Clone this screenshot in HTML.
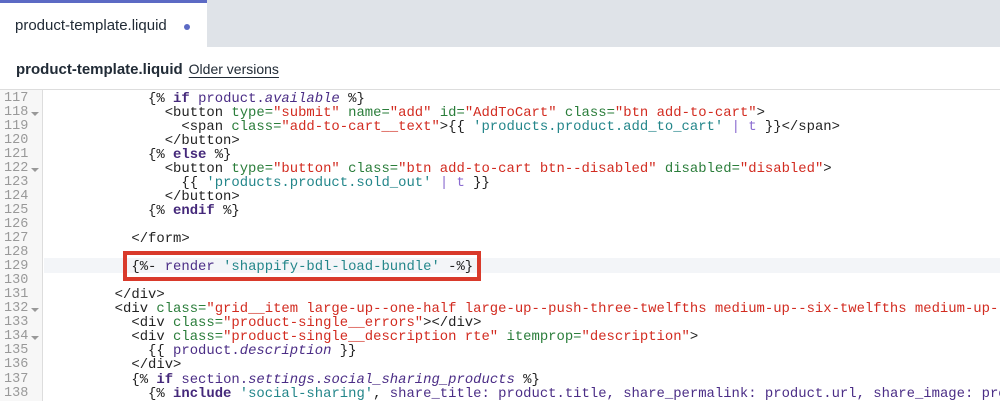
<!DOCTYPE html>
<html><head><meta charset="utf-8"><style>
*{margin:0;padding:0;box-sizing:border-box}
body{width:1000px;height:400px;overflow:hidden;background:#fff;font-family:"Liberation Sans",sans-serif;position:relative}
.tabs{position:absolute;left:0;top:0;width:1000px;height:47px;background:#dfe3e8}
.tab{position:absolute;left:0;top:0;width:207px;height:47px;background:#fff;border-top:3px solid #5c6ac4}
.tab span{position:absolute;left:15px;top:14px;font-size:15px;color:#212b36}
.dot{position:absolute;left:184px;top:21px;width:6px;height:6px;border-radius:50%;background:#5c6ac4}
.hdr{position:absolute;left:16px;top:61px;font-size:15px;color:#212b36}
.hdr b{font-weight:bold}
.hdr u{margin-left:6px;font-size:14px;text-decoration:underline;text-underline-offset:3px}
.ed{position:absolute;left:0;top:89px;width:1000px;height:311px;border-top:1px solid #ddd}
.gut{position:absolute;left:0;top:0;width:43px;height:311px;background:#f7f7f7;border-right:1px solid #ddd}
.ln{position:absolute;left:4px;font-family:"Liberation Mono",monospace;font-size:13.5px;color:#999;height:14px;line-height:14px}
.ar{position:absolute;left:31px;width:0;height:0;border-left:4px solid transparent;border-right:4px solid transparent;border-top:4px solid #999}
.cl{position:absolute;left:48px;white-space:pre;font-family:"Liberation Mono",monospace;font-size:13.9px;height:14px;line-height:14px;color:#222}
.hl{position:absolute;left:44px;top:168px;width:956px;height:15px;background:#f3f5f8}
.box{position:absolute;left:123px;top:251px;width:358px;height:30px;border:4px solid #d93a2b}
.k{color:#44287a;font-weight:bold}.v{color:#4b2d86}.i{font-style:italic}.s{color:#d22b20}.a{color:#2a7d3a}.q{color:#23868a}.p{color:#8a6bd0}
</style></head><body>
<div class="tabs"><div class="tab"><span>product-template.liquid</span><div class="dot"></div></div></div>
<div class="hdr"><b>product-template.liquid</b><u>Older versions</u></div>
<div class="ed">
<div class="gut"></div>
<div class="hl"></div>
</div>
<div class="box"></div>
<div id="c"></div>
<script>
var L=[
[117,12,'<span>{% </span><span class="k">if</span> <span class="v">product.<span class="i">available</span></span> %}',0],
[118,14,'&lt;button <span class="a">type=</span><span class="s">"submit"</span> <span class="a">name=</span><span class="s">"add"</span> <span class="a">id=</span><span class="s">"AddToCart"</span> <span class="a">class=</span><span class="s">"btn add-to-cart"</span>&gt;',1],
[119,16,'&lt;span <span class="a">class=</span><span class="s">"add-to-cart__text"</span>&gt;{{ <span class="q">\'products.product.add_to_cart\'</span> <span class="p">|</span> <span class="p">t</span> }}&lt;/span&gt;',0],
[120,14,'&lt;/button&gt;',0],
[121,12,'{% <span class="k">else</span> %}',0],
[122,14,'&lt;button <span class="a">type=</span><span class="s">"button"</span> <span class="a">class=</span><span class="s">"btn add-to-cart btn--disabled"</span> <span class="a">disabled=</span><span class="s">"disabled"</span>&gt;',1],
[123,16,'{{ <span class="q">\'products.product.sold_out\'</span> <span class="p">|</span> <span class="p">t</span> }}',0],
[124,14,'&lt;/button&gt;',0],
[125,12,'{% <span class="k">endif</span> %}',0],
[126,0,'',0],
[127,10,'&lt;/form&gt;',0],
[128,0,'',0],
[129,10,'{%- <span class="v">render</span> <span class="q">\'shappify-bdl-load-bundle\'</span> -%}',0],
[130,0,'',0],
[131,8,'&lt;/div&gt;',0],
[132,8,'&lt;div <span class="a">class=</span><span class="s">"grid__item large-up--one-half large-up--push-three-twelfths medium-up--six-twelfths medium-up--push-three</span>',1],
[133,10,'&lt;div <span class="a">class=</span><span class="s">"product-single__errors"</span>&gt;&lt;/div&gt;',0],
[134,10,'&lt;div <span class="a">class=</span><span class="s">"product-single__description rte"</span> <span class="a">itemprop=</span><span class="s">"description"</span>&gt;',1],
[135,12,'{{ <span class="v">product.<span class="i">description</span></span> }}',0],
[136,10,'&lt;/div&gt;',0],
[137,10,'{% <span class="k">if</span> <span class="v">section.<span class="i">settings</span>.<span class="i">social_sharing_products</span></span> %}',0],
[138,12,'{% <span class="k">include</span> <span class="q">\'social-sharing\'</span>, <span class="v">share_title: product.title, share_permalink: product.url, share_image: product</span>',0]
];
var h='';
L.forEach(function(l,i){var t=91.5+i*14.05;
h+='<div class="ln" style="top:'+t+'px">'+l[0]+'</div>';
if(l[3])h+='<div class="ar" style="top:'+(t+6)+'px"></div>';
h+='<div class="cl" style="top:'+t+'px;width:952px;overflow:hidden">'+' '.repeat(l[1])+l[2]+'</div>';});
document.getElementById('c').innerHTML=h;
</script>
</body></html>
